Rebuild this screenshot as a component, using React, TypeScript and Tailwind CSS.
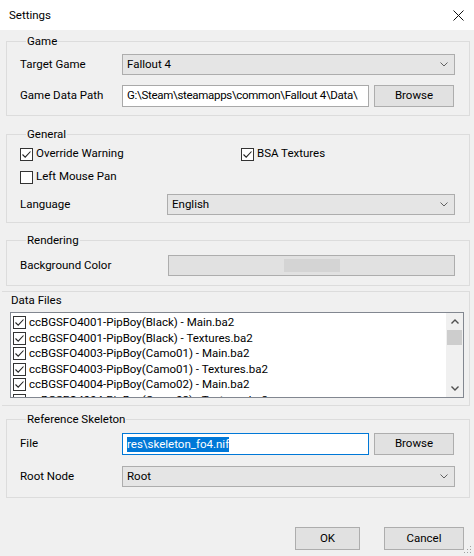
import React from 'react';

const font = { fontFamily: 'Roboto, "Liberation Sans", sans-serif' };

function Chevron() {
  return (
    <svg width="8" height="5" viewBox="0 0 8 5" className="shrink-0">
      <path d="M0.5 0.5 L4 4 L7.5 0.5" fill="none" stroke="#606060" strokeWidth="1" />
    </svg>
  );
}

function Combo({ value, width }: { value: string; width: string }) {
  return (
    <div className={`${width} h-[21px] flex items-center justify-between bg-[#e5e5e5] border border-[#adadad] pl-[4px] pr-[6px]`}>
      <span>{value}</span>
      <Chevron />
    </div>
  );
}

function Button({ label, width }: { label: string; width: string }) {
  return (
    <div className={`${width} flex items-center justify-center bg-[#e1e1e1] border border-[#adadad]`}>
      {label}
    </div>
  );
}

function Check() {
  return (
    <svg width="11" height="11" viewBox="0 0 11 11">
      <path d="M1.5 5.5 L4.2 8.2 L9.5 2.5" fill="none" stroke="#222222" strokeWidth="1.1" />
    </svg>
  );
}

function CheckBox({ checked, label }: { checked: boolean; label: string }) {
  return (
    <div className="flex items-center h-[16px] gap-[3px]">
      <div className="w-[13px] h-[13px] bg-white border border-[#333333] flex items-center justify-center">
        {checked && <Check />}
      </div>
      <span>{label}</span>
    </div>
  );
}

function Group({ title, className, children }: { title: string; className: string; children: React.ReactNode }) {
  return (
    <fieldset className={`ml-[6px] w-[464px] border border-[#dcdcdc] ${className}`}>
      <legend className="ml-[6px] px-[1px] leading-[16px]">{title}</legend>
      {children}
    </fieldset>
  );
}

const dataFiles = [
  'ccBGSFO4001-PipBoy(Black) - Main.ba2',
  'ccBGSFO4001-PipBoy(Black) - Textures.ba2',
  'ccBGSFO4003-PipBoy(Camo01) - Main.ba2',
  'ccBGSFO4003-PipBoy(Camo01) - Textures.ba2',
  'ccBGSFO4004-PipBoy(Camo02) - Main.ba2',
  'ccBGSFO4004-PipBoy(Camo02) - Textures.ba2',
];

export default function App() {
  return (
    <div className="w-[474px] h-[556px] bg-[#f0f0f0] text-[11.5px] text-black overflow-hidden flex flex-col" style={font}>
      {/* title bar */}
      <div className="h-[30px] bg-white flex items-center justify-between pl-[9px] pr-[10px] pt-px shrink-0">
        <span>Settings</span>
        <svg width="11" height="11" viewBox="0 0 11 11">
          <path d="M0.5 0.5 L10.5 10.5 M10.5 0.5 L0.5 10.5" stroke="#111111" strokeWidth="1" />
        </svg>
      </div>

      <Group title="Game" className="mt-[3px] pl-[13px] pr-[14px] pt-[5px] pb-[8px]">
        <div className="flex items-center">
          <span className="w-[102px]">Target Game</span>
          <Combo value="Fallout 4" width="w-[333px]" />
        </div>
        <div className="flex items-center mt-[10px]">
          <span className="w-[102px]">Game Data Path</span>
          <div className="w-[247px] h-[22px] bg-white border border-[#a9a9a9] flex items-center pl-[4px] overflow-hidden whitespace-nowrap tracking-[-0.3px]">
            G:\Steam\steamapps\common\Fallout 4\Data\
          </div>
          <div className="ml-[5px]">
            <Button label="Browse" width="w-[80px] h-[22px]" />
          </div>
        </div>
      </Group>

      <Group title="General" className="mt-[10px] pl-[13px] pr-[14px] pt-[4px] pb-[7px]">
        <div className="flex">
          <div className="w-[221px]">
            <CheckBox checked label="Override Warning" />
          </div>
          <CheckBox checked label="BSA Textures" />
        </div>
        <div className="mt-[7px]">
          <CheckBox checked={false} label="Left Mouse Pan" />
        </div>
        <div className="flex items-center mt-[9px]">
          <span className="w-[147px]">Language</span>
          <Combo value="English" width="w-[288px]" />
        </div>
      </Group>

      <Group title="Rendering" className="mt-[9px] pl-[13px] pr-[14px] pt-[7px] pb-[9px]">
        <div className="flex items-center">
          <span className="w-[148px]">Background Color</span>
          <div className="w-[287px] h-[21px] bg-[#e1e1e1] border border-[#adadad] flex items-center justify-center">
            <div className="w-[56px] h-[13px] bg-[#d4d4d4]" />
          </div>
        </div>
      </Group>

      <div className="mt-[5px] ml-[2px] w-[468px] border-t border-r border-b border-[#dcdcdc] pl-[8px] pb-[7px]">
        <div className="leading-[14px] pl-px pt-[1px]">Data Files</div>
        <div className="mt-[5px] w-[454px] h-[86px] bg-white border border-[#828790] flex overflow-hidden">
          <div className="flex-1 pl-[2px] pt-[2px] overflow-hidden">
            {dataFiles.map((f) => (
              <div key={f} className="flex items-center h-[15.5px] gap-[3px] whitespace-nowrap">
                <div className="w-[13px] h-[13px] shrink-0 border border-[#333333] flex items-center justify-center">
                  <Check />
                </div>
                <span>{f}</span>
              </div>
            ))}
          </div>
          <div className="w-[17px] bg-[#f0f0f0] flex flex-col">
            <div className="h-[17px] flex items-center justify-center">
              <svg width="8" height="5" viewBox="0 0 8 5">
                <path d="M0.5 4.5 L4 1 L7.5 4.5" fill="none" stroke="#505050" strokeWidth="1.4" />
              </svg>
            </div>
            <div className="mx-[1px] h-[15px] bg-[#cdcdcd]" />
            <div className="flex-1" />
            <div className="h-[17px] flex items-center justify-center">
              <svg width="8" height="5" viewBox="0 0 8 5">
                <path d="M0.5 0.5 L4 4 L7.5 0.5" fill="none" stroke="#505050" strokeWidth="1.4" />
              </svg>
            </div>
          </div>
        </div>
      </div>

      <Group title="Reference Skeleton" className="mt-[5px] pl-[13px] pr-[14px] pt-[6px] pb-[10px]">
        <div className="flex items-center">
          <span className="w-[102px]">File</span>
          <div className="w-[247px] h-[22px] bg-white border border-[#0078d7] flex items-center pl-[4px]">
            <span className="bg-[#0078d7] text-white leading-[15px]">res\skeleton_fo4.nif</span>
          </div>
          <div className="ml-[5px]">
            <Button label="Browse" width="w-[80px] h-[22px]" />
          </div>
        </div>
        <div className="flex items-center mt-[11px]">
          <span className="w-[102px]">Root Node</span>
          <Combo value="Root" width="w-[333px]" />
        </div>
      </Group>

      <div className="flex-1 flex items-end justify-end pr-[10px] pb-[6px] relative">
        <Button label="OK" width="w-[65px] h-[23px]" />
        <div className="ml-[24px]">
          <Button label="Cancel" width="w-[80px] h-[23px]" />
        </div>
        <svg width="8" height="8" viewBox="0 0 8 8" className="absolute right-[2px] bottom-[2px]">
          <rect x="6" y="0" width="1" height="1" fill="#a0a0a0" />
          <rect x="3" y="3" width="1" height="1" fill="#a0a0a0" />
          <rect x="6" y="3" width="1" height="1" fill="#a0a0a0" />
          <rect x="0" y="6" width="1" height="1" fill="#a0a0a0" />
          <rect x="3" y="6" width="1" height="1" fill="#a0a0a0" />
          <rect x="6" y="6" width="1" height="1" fill="#a0a0a0" />
        </svg>
      </div>
    </div>
  );
}
